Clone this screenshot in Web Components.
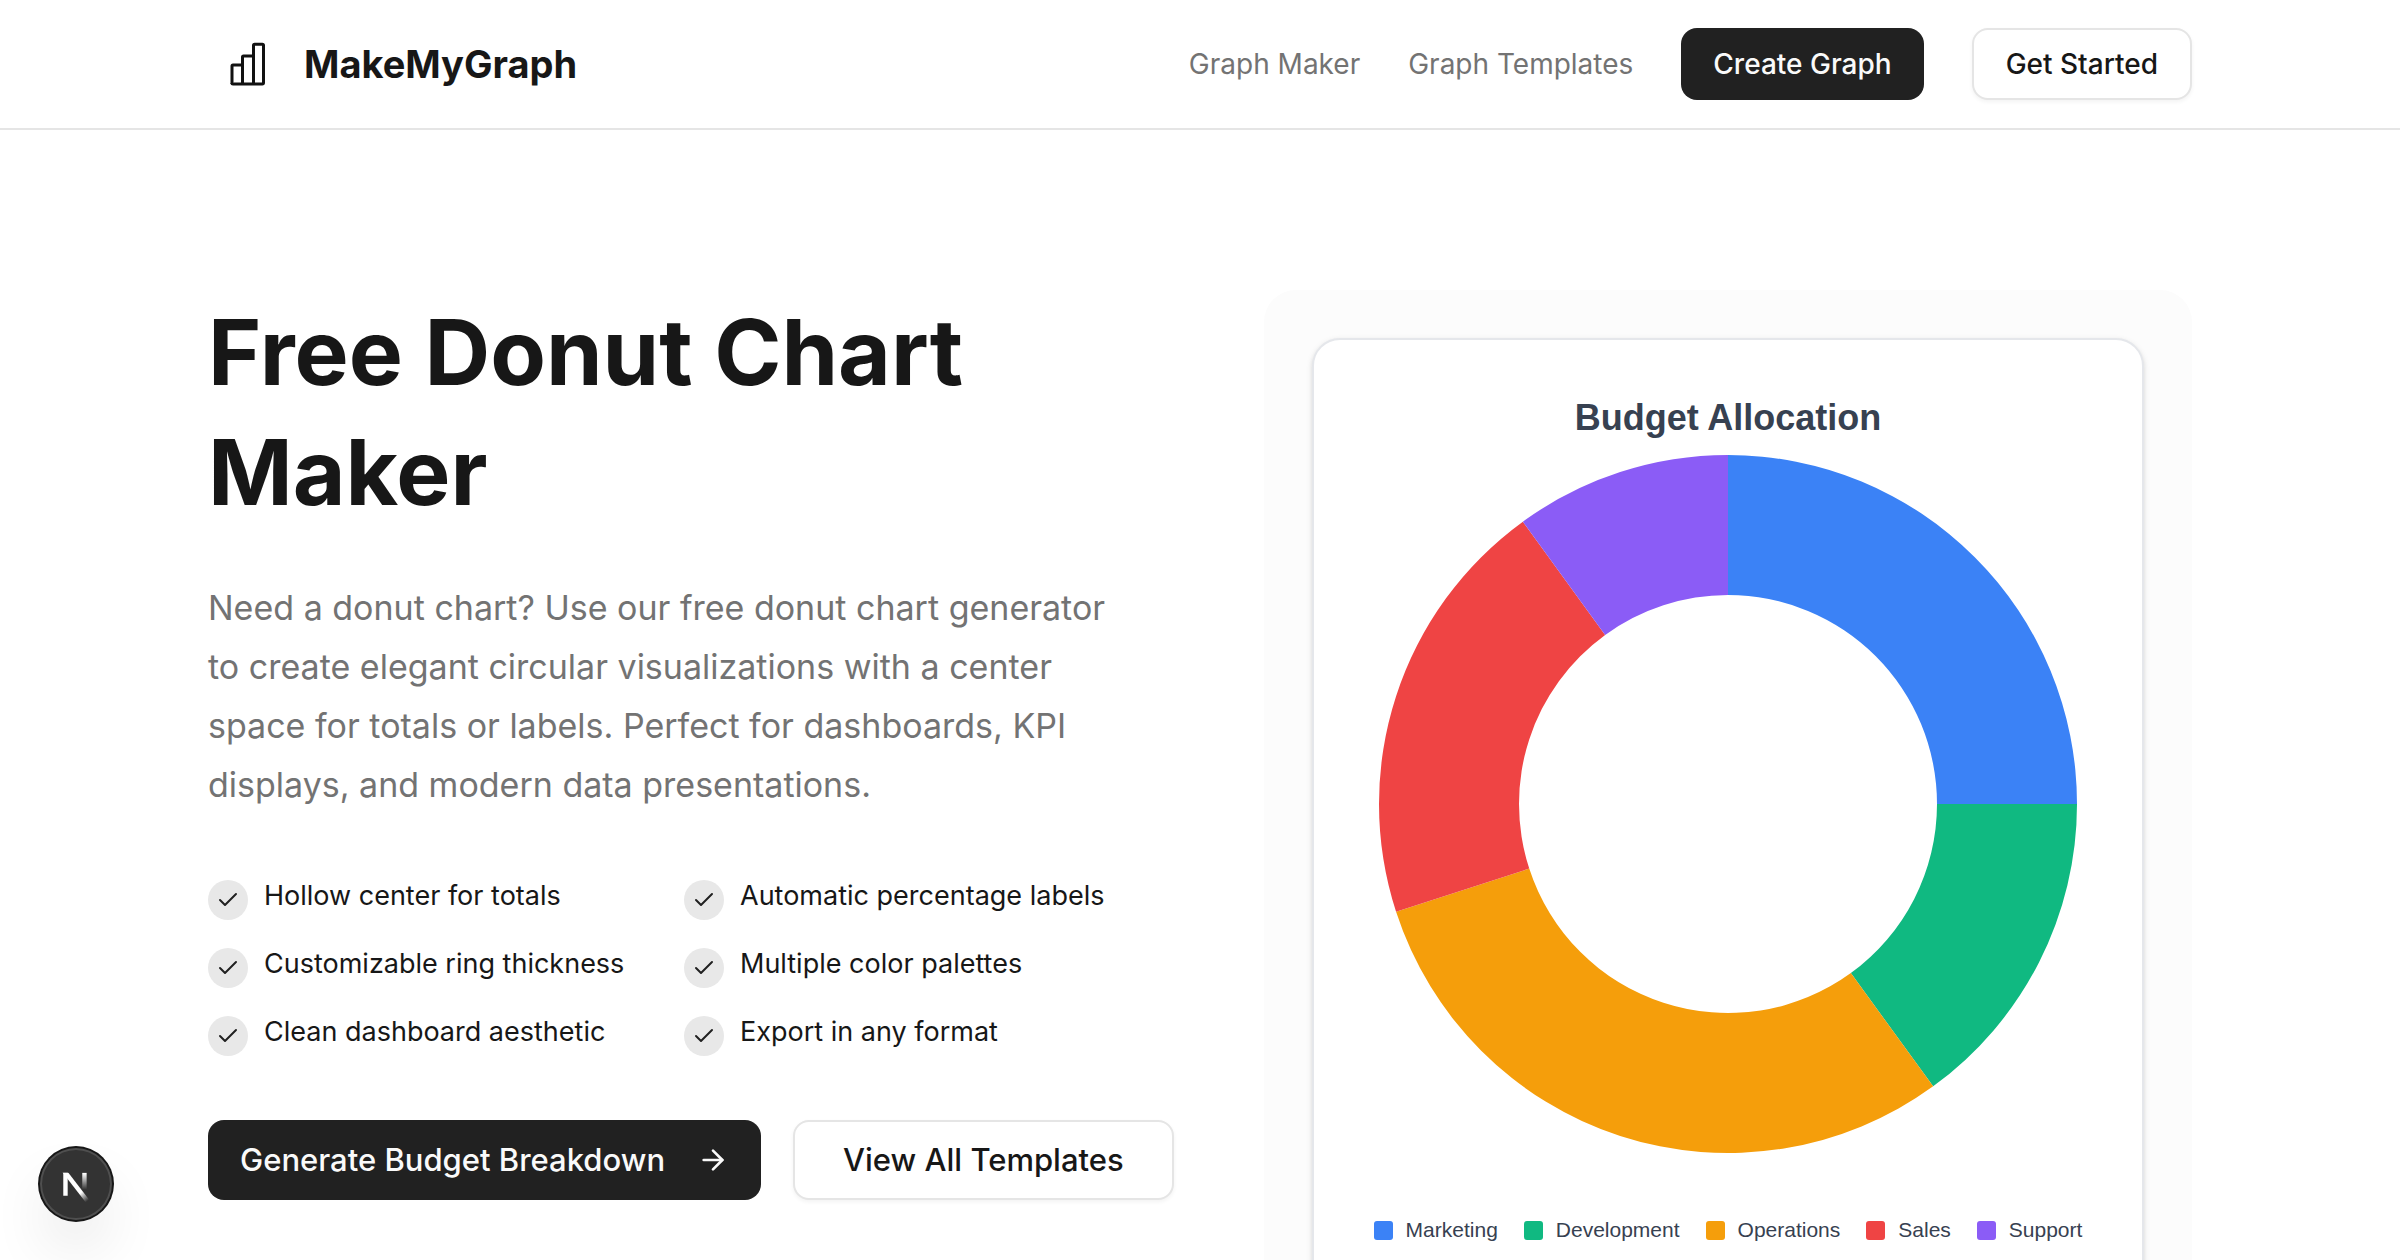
<!DOCTYPE html>
<html lang="en">
<head>
<meta charset="utf-8">
<meta name="viewport" content="width=device-width, initial-scale=1">
<title>Free Donut Chart Maker - MakeMyGraph</title>
<style>
  :root {
    --foreground: #171717;
    --muted: #737373;
    --border: #e5e5e5;
    --primary: #212121;
    --container: 1984px;
  }
  html {
    scrollbar-width: none;
  }
  body {
    margin: 0;
    background: #fff;
    color: var(--foreground);
    font-family: Inter, "Liberation Sans", sans-serif;
  }
</style>
</head>
<body>
  <site-header>
    <nav-link href="#maker">Graph Maker</nav-link>
    <nav-link href="#templates">Graph Templates</nav-link>
    <ui-button variant="primary">Create Graph</ui-button>
    <ui-button variant="outline">Get Started</ui-button>
  </site-header>

  <main>
    <hero-section>
      <span slot="title">Free Donut Chart Maker</span>
      <span slot="description">Need a donut chart? Use our free donut chart generator to create elegant circular visualizations with a center space for totals or labels. Perfect for dashboards, KPI displays, and modern data presentations.</span>
      <feature-item slot="features">Hollow center for totals</feature-item>
      <feature-item slot="features">Automatic percentage labels</feature-item>
      <feature-item slot="features">Customizable ring thickness</feature-item>
      <feature-item slot="features">Multiple color palettes</feature-item>
      <feature-item slot="features">Clean dashboard aesthetic</feature-item>
      <feature-item slot="features">Export in any format</feature-item>
      <ui-button slot="actions" variant="primary" size="lg" arrow>Generate Budget Breakdown</ui-button>
      <ui-button slot="actions" variant="outline" size="lg">View All Templates</ui-button>
      <donut-chart slot="preview" heading="Budget Allocation"></donut-chart>
    </hero-section>
  </main>

  <dev-indicator></dev-indicator>

<script>
class SiteHeader extends HTMLElement {
  connectedCallback() {
    this.attachShadow({ mode: 'open' });
    this.shadowRoot.innerHTML = `
      <style>
        :host {
          display: block;
          border-bottom: 2px solid var(--border);
        }
        header {
          display: flex;
          align-items: center;
          justify-content: space-between;
          height: 128px;
          max-width: var(--container);
          margin: 0 auto;
        }
        .brand {
          display: flex;
          align-items: center;
          gap: 16px;
          color: inherit;
          text-decoration: none;
          font-size: 38px;
          font-weight: 700;
          line-height: 56px;
        }
        .brand svg {
          width: 80px;
          height: 80px;
        }
        nav {
          display: flex;
          align-items: center;
          gap: 48px;
        }
      </style>
      <header>
        <a class="brand" href="#">
          <svg viewBox="0 0 80 80" fill="none" stroke="#111" stroke-width="3" stroke-linejoin="round" aria-hidden="true">
            <path d="M24 60V42q0-1 1-1h9.500v18.500"/>
            <path d="M34.500 60V33q0-1 1-1h10"/>
            <path d="M45.500 60V21.500q0-1.200 1.200-1.200h7.600q1.200 0 1.200 1.200v37.300q0 1.200-1.200 1.200H25q-1 0-1-1"/>
          </svg>
          <span>MakeMyGraph</span>
        </a>
        <nav><slot></slot></nav>
      </header>
    `;
  }
}

class NavLink extends HTMLElement {
  connectedCallback() {
    this.attachShadow({ mode: 'open' });
    this.shadowRoot.innerHTML = `
      <style>
        :host { display: block; }
        a {
          color: var(--muted);
          font-size: 28px;
          line-height: 40px;
          text-decoration: none;
          white-space: nowrap;
        }
        a:hover { color: var(--foreground); }
      </style>
      <a href="${this.getAttribute('href')}"><slot></slot></a>
    `;
  }
}

class UiButton extends HTMLElement {
  connectedCallback() {
    const arrow = this.hasAttribute('arrow') ? `
      <svg viewBox="0 0 24 24" fill="none" stroke="currentColor" stroke-width="2" stroke-linecap="round" stroke-linejoin="round" aria-hidden="true">
        <path d="M5 12h14"/><path d="m12 5 7 7-7 7"/>
      </svg>` : '';
    this.attachShadow({ mode: 'open' });
    this.shadowRoot.innerHTML = `
      <style>
        :host { display: block; }
        button {
          display: flex;
          align-items: center;
          justify-content: center;
          gap: 32px;
          box-sizing: border-box;
          height: 72px;
          padding: 0 32px;
          border: 0;
          border-radius: 16px;
          background: var(--primary);
          color: #fafafa;
          font: 500 28px/40px Inter, "Liberation Sans", sans-serif;
          white-space: nowrap;
          cursor: pointer;
        }
        svg {
          width: 32px;
          height: 32px;
        }
        :host([variant="outline"]) button {
          border: 2px solid var(--border);
          background: #fff;
          color: var(--foreground);
          box-shadow: 0 2px 4px rgba(0, 0, 0, 0.05);
        }
        :host([size="lg"]) button {
          height: 80px;
          font-size: 31px;
        }
        :host([size="lg"][variant="outline"]) button {
          padding: 0 48px;
        }
      </style>
      <button type="button"><slot></slot>${arrow}</button>
    `;
  }
}

class FeatureItem extends HTMLElement {
  connectedCallback() {
    this.setAttribute('role', 'listitem');
    this.attachShadow({ mode: 'open' });
    this.shadowRoot.innerHTML = `
      <style>
        :host {
          display: flex;
          align-items: flex-start;
          gap: 16px;
          font-size: 27px;
          line-height: 40px;
        }
        .check {
          display: flex;
          align-items: center;
          justify-content: center;
          flex-shrink: 0;
          width: 40px;
          height: 40px;
          margin-top: 4px;
          border-radius: 50%;
          background: #e8e8e8;
        }
        svg {
          width: 24px;
          height: 24px;
        }
      </style>
      <span class="check">
        <svg viewBox="0 0 24 24" fill="none" stroke="#212121" stroke-width="2" stroke-linecap="round" stroke-linejoin="round" aria-hidden="true">
          <path d="M20 6 9 17l-5-5"/>
        </svg>
      </span>
      <span><slot></slot></span>
    `;
  }
}

class HeroSection extends HTMLElement {
  connectedCallback() {
    this.attachShadow({ mode: 'open' });
    this.shadowRoot.innerHTML = `
      <style>
        :host { display: block; }
        section {
          display: grid;
          grid-template-columns: minmax(0, 1fr) minmax(0, 1fr);
          align-items: start;
          gap: 128px;
          max-width: var(--container);
          margin: 0 auto;
          padding: 160px 0 0;
        }
        h1 {
          margin: 0 0 46px;
          padding-top: 2px;
          font-size: 91px;
          font-weight: 700;
          line-height: 120px;
        }
        p {
          margin: 0 0 62px;
          color: var(--muted);
          font-size: 34px;
          line-height: 59px;
        }
        .features {
          display: grid;
          grid-template-columns: 1fr 1fr;
          gap: 24px;
          margin-bottom: 64px;
        }
        .actions {
          display: flex;
          gap: 32px;
        }
        .preview {
          padding: 48px;
          border-radius: 32px;
          background: #fcfcfc;
        }
      </style>
      <section>
        <div>
          <h1><slot name="title"></slot></h1>
          <p><slot name="description"></slot></p>
          <div class="features" role="list"><slot name="features"></slot></div>
          <div class="actions"><slot name="actions"></slot></div>
        </div>
        <div class="preview"><slot name="preview"></slot></div>
      </section>
    `;
  }
}

const budget = [
  { label: 'Marketing', value: 25, color: '#3b82f6' },
  { label: 'Development', value: 15, color: '#10b981' },
  { label: 'Operations', value: 30, color: '#f59e0b' },
  { label: 'Sales', value: 20, color: '#ef4444' },
  { label: 'Support', value: 10, color: '#8b5cf6' },
];

class DonutChart extends HTMLElement {
  // Ring segment between two shares of the full turn, clockwise from the top
  slice(from, to, color) {
    const outer = 349;
    const inner = 209;
    const point = (r, share) => {
      const angle = share * 2 * Math.PI - Math.PI / 2;
      return `${(r * Math.cos(angle)).toFixed(2)} ${(r * Math.sin(angle)).toFixed(2)}`;
    };
    const large = to - from > 0.5 ? 1 : 0;
    return `<path fill="${color}" d="M${point(outer, from)}A${outer} ${outer} 0 ${large} 1 ${point(outer, to)}L${point(inner, to)}A${inner} ${inner} 0 ${large} 0 ${point(inner, from)}Z"/>`;
  }

  connectedCallback() {
    const total = budget.reduce((sum, item) => sum + item.value, 0);
    let start = 0;
    const slices = budget.map((item) => {
      const end = start + item.value / total;
      const path = this.slice(start, end, item.color);
      start = end;
      return path;
    }).join('');
    const legend = budget.map((item) => `
      <li><span class="swatch" style="background: ${item.color}"></span>${item.label}</li>
    `).join('');

    this.attachShadow({ mode: 'open' });
    this.shadowRoot.innerHTML = `
      <style>
        :host {
          display: flex;
          flex-direction: column;
          align-items: center;
          padding: 56px 48px;
          border: 2px solid #e5e7eb;
          border-radius: 28px;
          background: #fff;
          color: #374151;
          font-family: "Liberation Sans", Arial, sans-serif;
          box-shadow: 0 2px 6px rgba(0, 0, 0, 0.1), 0 2px 4px rgba(0, 0, 0, 0.06);
        }
        h2 {
          margin: 0 0 14px;
          font-size: 36px;
          font-weight: 700;
          line-height: 44px;
        }
        svg {
          display: block;
          width: 100%;
          max-width: 700px;
        }
        ul {
          display: flex;
          justify-content: center;
          gap: 26px;
          margin: 64px 0 0;
          padding: 0;
          list-style: none;
          font-size: 21px;
          line-height: 24px;
        }
        li {
          display: flex;
          align-items: center;
          gap: 13px;
        }
        .swatch {
          width: 19px;
          height: 19px;
          border-radius: 3px;
        }
      </style>
      <h2>${this.getAttribute('heading')}</h2>
      <svg viewBox="-350 -350 700 700" role="img" aria-label="${this.getAttribute('heading')}">${slices}</svg>
      <ul>${legend}</ul>
    `;
  }
}

class DevIndicator extends HTMLElement {
  connectedCallback() {
    this.attachShadow({ mode: 'open' });
    this.shadowRoot.innerHTML = `
      <style>
        :host {
          position: fixed;
          left: 40px;
          bottom: 40px;
        }
        button {
          display: flex;
          align-items: center;
          justify-content: center;
          width: 72px;
          height: 72px;
          padding: 0;
          border: 0;
          border-radius: 50%;
          background: #333;
          box-shadow: 0 0 0 2px #171717, inset 0 0 0 2px rgba(255, 255, 255, 0.14), 0 32px 64px -16px rgba(0, 0, 0, 0.24);
          cursor: pointer;
        }
        svg {
          width: 32px;
          height: 32px;
          overflow: visible;
        }
      </style>
      <button type="button" aria-label="Open Next.js Dev Tools">
        <svg viewBox="0 0 16 16" fill="none" stroke-width="2.2" aria-hidden="true">
          <defs>
            <linearGradient id="diagonal" gradientUnits="userSpaceOnUse" x1="9.9" y1="11.1" x2="13.3" y2="15.2">
              <stop stop-color="#fff"/>
              <stop offset="1" stop-color="#fff" stop-opacity="0"/>
            </linearGradient>
            <linearGradient id="stem" gradientUnits="userSpaceOnUse" x1="11.8" y1="1.4" x2="11.8" y2="9.5">
              <stop stop-color="#fff"/>
              <stop offset="1" stop-color="#fff" stop-opacity="0"/>
            </linearGradient>
            <clipPath id="top"><path d="M0 1h16v11.600l-2 4H0z"/></clipPath>
          </defs>
          <g transform="translate(0.4 1.3)" clip-path="url(#top)">
            <path d="M2.340 12.600V1" stroke="#fff"/>
            <path d="M13.300 15.200 2.340 1" stroke="url(#diagonal)" stroke-linecap="square"/>
            <path d="M11.825 1v12.100" stroke="url(#stem)"/>
          </g>
        </svg>
      </button>
    `;
  }
}

customElements.define('site-header', SiteHeader);
customElements.define('nav-link', NavLink);
customElements.define('ui-button', UiButton);
customElements.define('feature-item', FeatureItem);
customElements.define('hero-section', HeroSection);
customElements.define('donut-chart', DonutChart);
customElements.define('dev-indicator', DevIndicator);
</script>
</body>
</html>
